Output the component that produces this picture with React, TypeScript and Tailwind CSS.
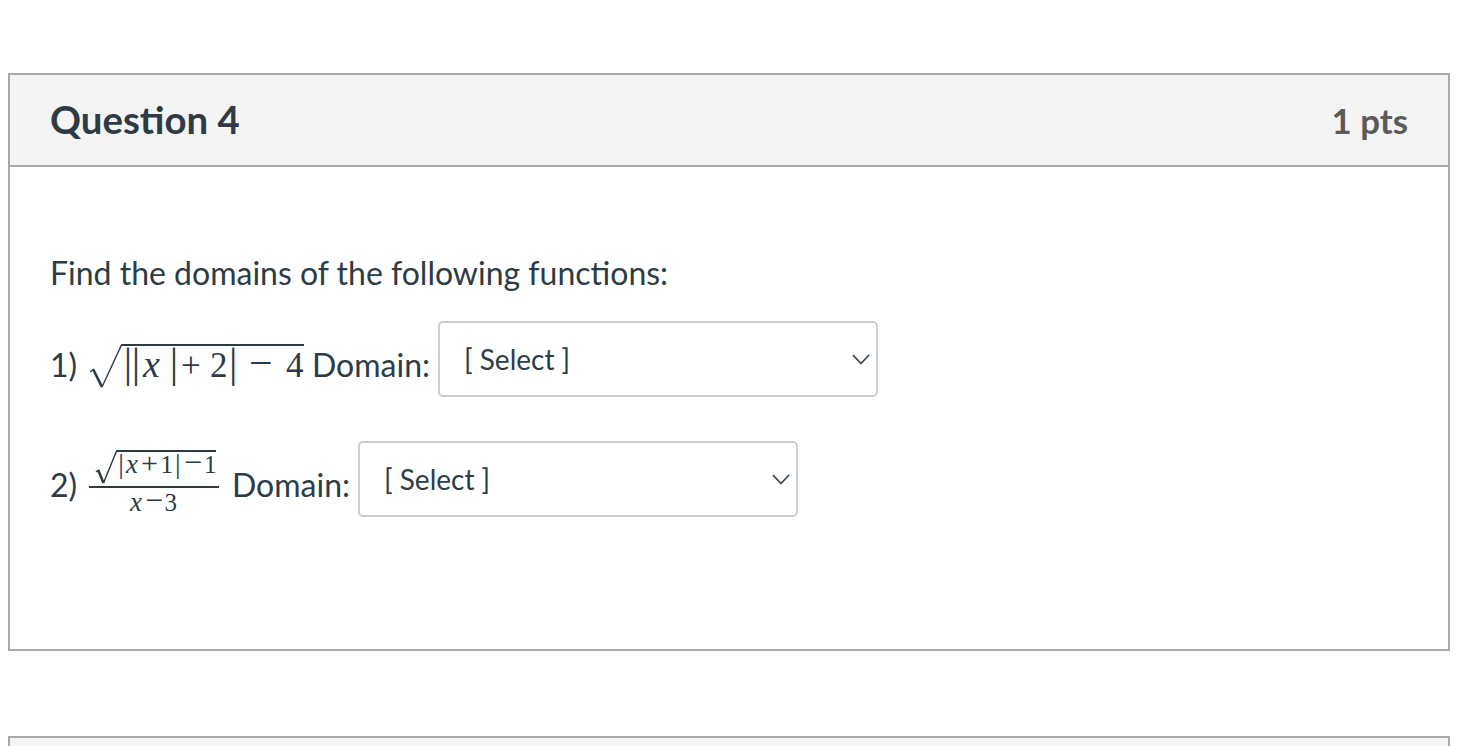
const SERIF = "font-['Liberation_Serif',serif]";

function Radical({ className, viewBox, thin, thick }: { className: string; viewBox: string; thin: string; thick: string }) {
  return (
    <svg className={className} viewBox={viewBox} fill="none" stroke="#2d3b45">
      <path d={thin} strokeWidth="1.4" strokeLinejoin="miter" />
      <path d={thick} strokeWidth="2.6" />
    </svg>
  );
}

function Chevron() {
  return (
    <svg width="18" height="11" viewBox="0 0 18 11" fill="none" stroke="#3d4a54" strokeWidth="1.8">
      <path d="M1 1 L9 9.5 L17 1" />
    </svg>
  );
}

function SelectBox() {
  return (
    <div className="flex h-[76px] w-[440px] shrink-0 items-center justify-between rounded-[5px] border-2 border-[#c7cdd1] bg-white pl-[24px] pr-[6px] text-[28px]">
      <span>[ Select ]</span>
      <span className="flex">
        <Chevron />
      </span>
    </div>
  );
}

function FirstFormula() {
  return (
    <span className={`flex items-start ${SERIF}`}>
      <Radical
        className="h-[46px] w-[34px]"
        viewBox="0 0 34 46"
        thin="M2 28 L5.5 25.5 M14 43 L33.5 1 L34 1"
        thick="M5 25 L14 43"
      />
      <span className="flex h-[46px] w-[182px] items-baseline whitespace-pre border-t-2 border-[#2d3b45] text-[35px] leading-none">
        <span className="ml-[1.8px] text-[42px] leading-[34px]">|</span>
        <span className="ml-[-0.4px] text-[42px] leading-[34px]">|</span>
        <span className="ml-[2.8px] text-[38px] italic leading-[30px]">x</span>
        <span className="ml-[9.9px] text-[42px] leading-[34px]">|</span>
        <span className="ml-[2.8px]">+</span>
        <span className="ml-[9.3px]">2</span>
        <span className="ml-[1.3px] text-[42px] leading-[34px]">|</span>
        <span className="ml-[11.8px] text-[42px] leading-[30px]">−</span>
        <span className="ml-[13.3px]">4</span>
      </span>
    </span>
  );
}

function SecondFormula() {
  return (
    <span className={`flex w-[130px] flex-col ${SERIF}`}>
      <span className="flex h-[35px] items-start pl-[4px]">
        <Radical
          className="h-[35px] w-[24px]"
          viewBox="0 0 24 35"
          thin="M3 22 L5.5 20 M10.5 33 L23.5 1 L24 1"
          thick="M5.2 20 L10.5 33"
        />
        <span className="flex h-[35px] w-[99px] items-baseline whitespace-pre border-t-2 border-[#2d3b45] text-[25px] leading-none">
          <span className="ml-[1.2px] text-[28px] leading-[23px]">|</span>
          <span className="ml-[2.2px] text-[27px] italic leading-[22px]">x</span>
          <span className="ml-[3px] text-[30px] leading-[20px]">+</span>
          <span className="ml-[2.5px]">1</span>
          <span className="ml-[2.2px] text-[28px] leading-[23px]">|</span>
          <span className="ml-[3.2px] text-[32px] leading-[20px]">−</span>
          <span className="ml-[2px]">1</span>
        </span>
      </span>
      <span className="mt-[1px] h-[2px] w-full bg-[#2d3b45]" />
      <span className="flex items-baseline whitespace-pre pl-[41px] text-[25px] leading-[24px]">
        <span className="text-[27px] italic">x</span>
        <span className="ml-[3px] text-[32px] leading-[24px]">−</span>
        <span className="ml-[1.5px]">3</span>
      </span>
    </span>
  );
}

export default function App() {
  return (
    <div className="h-[746px] overflow-hidden bg-white px-2 pt-[73px] font-['Lato',sans-serif] text-[32px] text-[#2d3b45]">
      <section className="h-[578px] border-2 border-[#a8a8a8]">
        <header className="flex h-[92px] items-center justify-between border-b-2 border-[#a8a8a8] bg-[#f4f4f4] px-[40px]">
          <h2 className="text-[38.4px] font-bold">Question 4</h2>
          <span className="pt-[2px] text-[34.8px] font-bold text-[#5b5b5b]">1 pts</span>
        </header>
        <div className="px-[40px] pt-[86px]">
          <p className="leading-[40px]">Find the domains of the following functions:</p>
          <div className="mt-[28px] flex h-[76px] items-start">
            <span className="mt-[20px] w-[38px]">1)</span>
            <span className="mt-[23px]">
              <FirstFormula />
            </span>
            <span className="ml-[8px] mt-[20px]">Domain:</span>
            <span className="ml-[8px]">
              <SelectBox />
            </span>
          </div>
          <div className="mt-[44px] flex h-[76px] items-start">
            <span className="mt-[20px] w-[39px]">2)</span>
            <span className="mt-[9px]">
              <SecondFormula />
            </span>
            <span className="ml-[13px] mt-[20px]">Domain:</span>
            <span className="ml-[8px]">
              <SelectBox />
            </span>
          </div>
        </div>
      </section>
      <section className="mt-[85px] h-[100px] border-2 border-[#a8a8a8] bg-[#f4f4f4]" />
    </div>
  );
}
